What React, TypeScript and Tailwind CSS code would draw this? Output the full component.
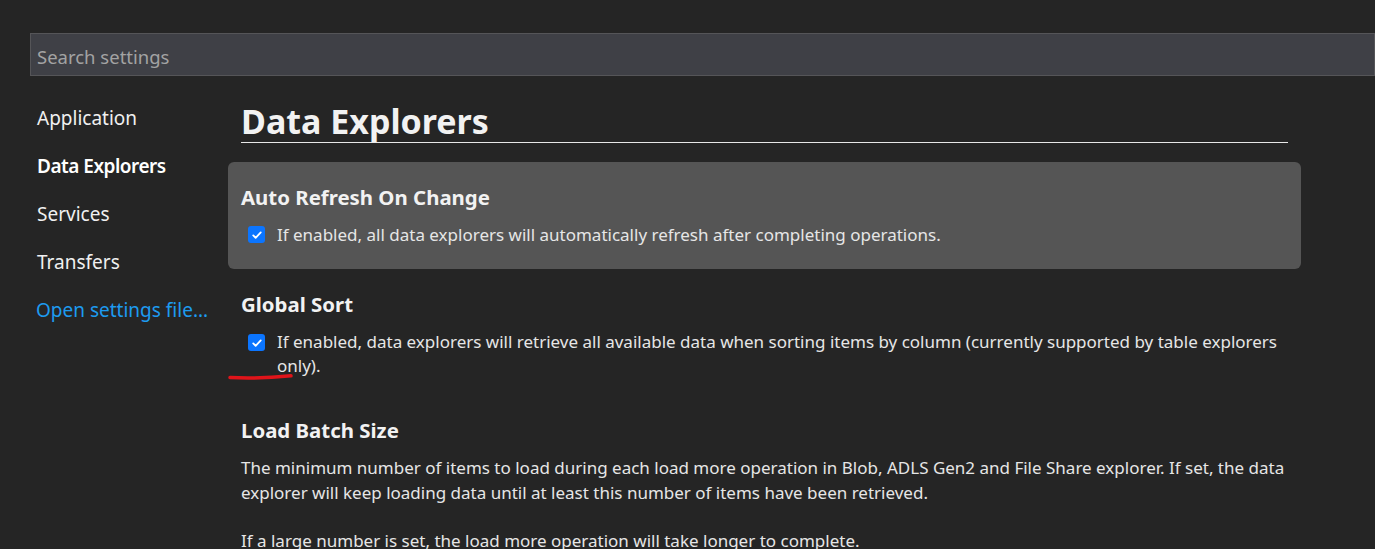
import React from 'react'

const navItems = ['Application', 'Data Explorers', 'Services', 'Transfers']

function Check() {
  return (
    <span className="mt-[4px] ml-[7px] flex h-[17px] w-[17px] shrink-0 items-center justify-center rounded-[3px] bg-[#0b75ff]">
      <svg viewBox="0 0 16 16" className="h-[12px] w-[12px]" fill="none">
        <path d="M3 8.5l3.2 3.2L13 4.5" stroke="#fff" strokeWidth="2.4" strokeLinecap="round" strokeLinejoin="round" />
      </svg>
    </span>
  )
}

export default function App() {
  return (
    <div className="relative h-[549px] w-[1375px] overflow-hidden bg-[#252525] font-['Noto_Sans',sans-serif] text-[#e6e6e6]">
      <div className="ml-[30px] mt-[33px] flex h-[43px] items-center border border-[#555558] bg-[#3f4046] px-[6px] pt-[4px] text-[18.5px] text-[#a3a3a3]">
        Search settings
      </div>

      <div className="flex">
        {/* sidebar */}
        <nav className="w-[228px] shrink-0 pt-[18px] pl-[37px] text-[19px] whitespace-nowrap">
          {navItems.map(item => (
            <div
              key={item}
              className={
                'flex h-[48px] items-center ' +
                (item === 'Data Explorers' ? 'font-semibold tracking-[-0.5px] text-white' : 'text-[#f0f0f0]')
              }
            >
              {item}
            </div>
          ))}
          <div className="-ml-px flex h-[48px] items-center text-[#1d9bf0]">Open settings file...</div>
        </nav>

        {/* content */}
        <main className="w-[1073px] text-[17px]">
          <h1 className="mx-[13px] mt-[25px] border-b border-[#e8e8e8] pb-[1px] text-[34px] font-bold leading-[40px] text-[#f2f2f2]">
            Data Explorers
          </h1>

          <section className="mt-[19px] rounded-[6px] bg-[#555555] px-[13px] pt-[21px] pb-[22px]">
            <h2 className="text-[20.4px] font-bold leading-[28px] text-[#f2f2f2]">Auto Refresh On Change</h2>
            <div className="mt-[11px] flex gap-[12px] leading-[25px]">
              <Check />
              <p>If enabled, all data explorers will automatically refresh after completing operations.</p>
            </div>
          </section>

          <section className="relative px-[13px] pt-[21px]">
            <h2 className="text-[20.4px] font-bold leading-[28px] text-[#f2f2f2]">Global Sort</h2>
            <div className="mt-[12px] flex gap-[12px] leading-[24px]">
              <Check />
              <p>
                If enabled, data explorers will retrieve all available data when sorting items by column (currently
                supported by table explorers only).
              </p>
            </div>
            {/* hand-drawn red annotation */}
            <svg className="absolute left-0 top-[102px] h-[10px] w-[70px]" viewBox="0 0 70 10" fill="none">
              <path d="M2 6.5C20 7.5 45 6.5 63 4.8" stroke="#e0141a" strokeWidth="3.5" strokeLinecap="round" />
            </svg>
          </section>

          <section className="px-[13px] pt-[38px]">
            <h2 className="text-[20.4px] font-bold leading-[28px] text-[#f2f2f2]">Load Batch Size</h2>
            <div className="mt-[12px] leading-[24.5px]">
              <p>
                The minimum number of items to load during each load more operation in Blob, ADLS Gen2 and File Share
                explorer. If set, the data explorer will keep loading data until at least this number of items have been
                retrieved.
              </p>
              <p className="mt-[24px]">If a large number is set, the load more operation will take longer to complete.</p>
            </div>
          </section>
        </main>
      </div>
    </div>
  )
}
